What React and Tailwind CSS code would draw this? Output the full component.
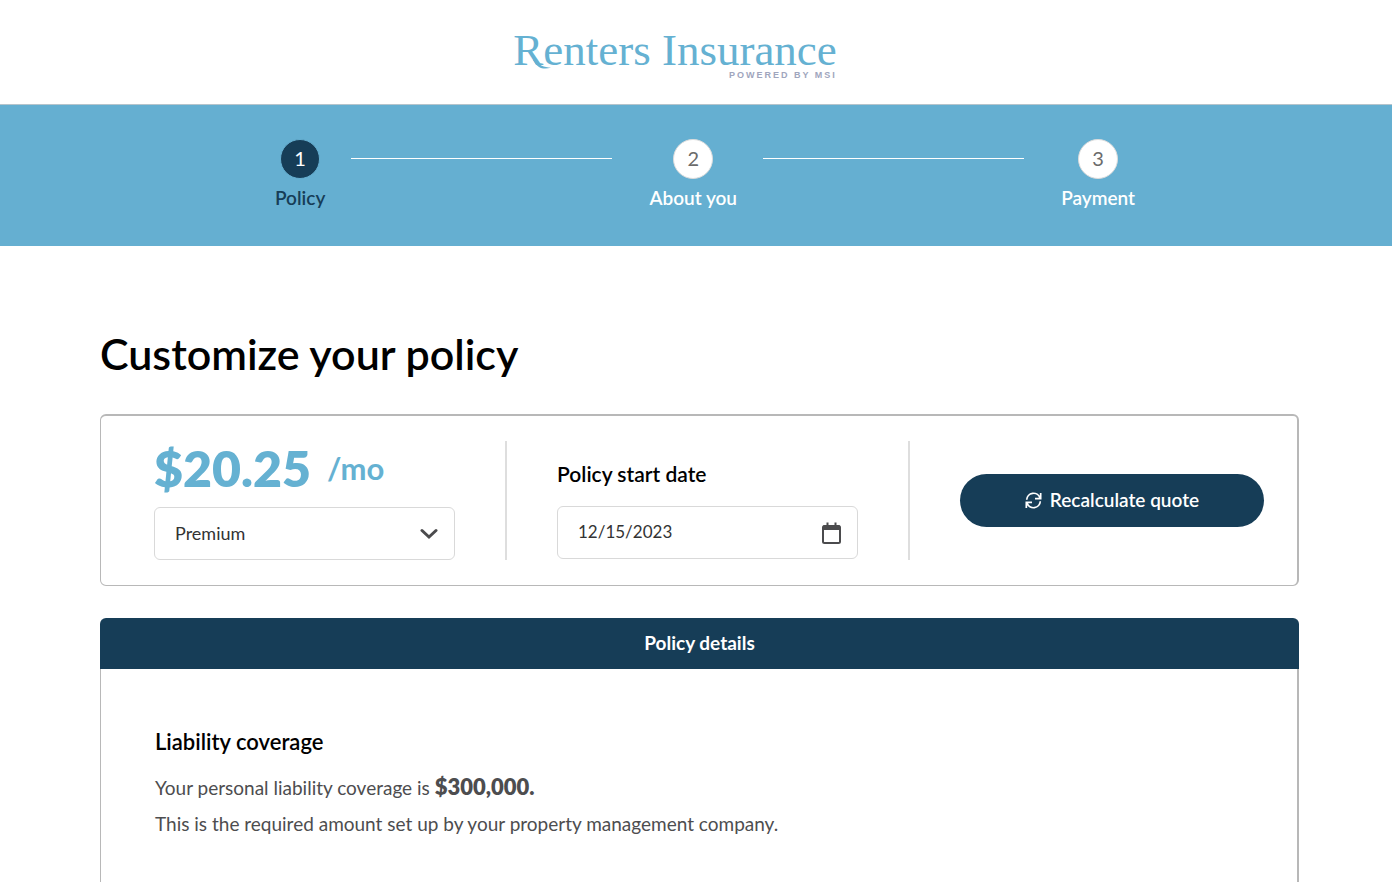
/**
 * Renters insurance quote page: brand header, three-step progress bar,
 * the quote summary card and the policy details panel.
 */
import { Fragment, useState } from 'react'

const STEPS = ['Policy', 'About you', 'Payment']
const PLANS = ['Basic', 'Standard', 'Premium']

function ChevronIcon() {
  return (
    <svg width="18" height="12" viewBox="0 0 18 12" fill="none" aria-hidden="true">
      <path d="M2 2.5l7 6.5 7-6.5" stroke="#4b4b4d" strokeWidth="3" strokeLinecap="round" />
    </svg>
  )
}

function CalendarIcon() {
  return (
    <svg width="19" height="22" viewBox="0 0 19 22" fill="none" aria-hidden="true">
      <path d="M5.5 0.5v3M13.5 0.5v3" stroke="#4b4b4d" strokeWidth="2" />
      <rect x="1" y="4" width="17" height="17" rx="1.5" stroke="#4b4b4d" strokeWidth="2" />
      <path d="M1 3.5h17v4.5H1z" fill="#4b4b4d" />
    </svg>
  )
}

function RefreshIcon() {
  return (
    <svg width="17" height="17" viewBox="0 0 18 18" fill="none" stroke="currentColor" strokeWidth="1.8" aria-hidden="true">
      <path d="M1.8 8.2A7.2 7.2 0 0 1 15.8 6.2M16.6 1v6h-6" />
      <path d="M16.2 9.8A7.2 7.2 0 0 1 2.2 11.8M1.4 17v-6h6" />
    </svg>
  )
}

// Swash that extends the leg of the R under the next letter
function LogoSwash() {
  return (
    <svg
      width="26"
      height="14"
      viewBox="0 0 26 14"
      fill="#65b1d2"
      aria-hidden="true"
      className="absolute top-[25px] left-[13px]"
    >
      <path d="M9 5C13 10 18 12.600 25 12.600C21 14 16 14 13 12C10 10 9 8 7 5z" />
    </svg>
  )
}

function Stepper({ current }) {
  return (
    <nav aria-label="Progress" className="h-[141px] bg-[#65afd1] pr-[257px] pl-[275px] pt-[34px]">
      <ol className="flex">
        {STEPS.map((label, i) => (
          <Fragment key={label}>
            {i > 0 && (
              <li aria-hidden="true" className="mt-[19px] mr-[37px] ml-[26px] h-px flex-1 bg-white" />
            )}
            <li className="flex flex-col items-center">
              <span
                className={
                  i === current
                    ? 'flex size-10 items-center justify-center rounded-full border border-[#65afd1] bg-[#163d57] pb-0.5 text-xl text-white'
                    : 'flex size-10 items-center justify-center rounded-full border border-[#dcdcdc] bg-white pb-0.5 text-xl text-[#6b6b6b]'
                }
              >
                {i + 1}
              </span>
              <span
                className={
                  i === current
                    ? 'mt-[7px] text-[19px] leading-6 font-semibold text-[#163d57]'
                    : 'mt-[7px] text-[19px] leading-6 font-semibold text-white'
                }
              >
                {label}
              </span>
            </li>
          </Fragment>
        ))}
      </ol>
    </nav>
  )
}

export default function App() {
  const [plan, setPlan] = useState('Premium')
  const [startDate, setStartDate] = useState('12/15/2023')

  return (
    <div className="h-screen overflow-hidden bg-white font-['Lato',sans-serif] text-black">
      <header className="flex h-[105px] justify-center border-b border-[#b5c4cc] pt-[30px] pr-[42px]">
        <div className="relative flex flex-col items-end">
          <div className="font-['Liberation_Serif',serif] text-[45px] leading-10 text-[#65b1d2]">
            Renters Insurance
          </div>
          <LogoSwash />
          <div className="font-['Liberation_Sans',sans-serif] text-[9px] leading-[10px] font-bold tracking-[2px] text-[#a0a5bd]">
            POWERED BY MSI
          </div>
        </div>
      </header>

      <Stepper current={0} />

      <main className="pt-[80px] pr-[93px] pl-[100px]">
        <h1 className="text-[43px] leading-[56px] font-semibold">Customize your policy</h1>

        <section className="mt-8 flex gap-[50px] rounded-md border border-t-2 border-r-2 border-[#b8b8b8] pt-[25px] pr-[33px] pb-[25px] pl-[53px]">
          <div className="flex-[301_1_0%]">
            <p className="flex items-center gap-4 leading-[54px] text-[#65b1d2]">
              <span className="text-[50px] font-extrabold">$20.25</span>
              <span className="text-[31px] font-bold">/mo</span>
            </p>
            <div className="relative mt-3">
              <select
                aria-label="Coverage plan"
                value={plan}
                onChange={(e) => setPlan(e.target.value)}
                className="block h-[53px] w-full appearance-none rounded-md border border-[#d9d9d9] bg-white px-5 pb-0.5 text-lg text-[#333]"
              >
                {PLANS.map((p) => (
                  <option key={p}>{p}</option>
                ))}
              </select>
              <span className="pointer-events-none absolute top-[21px] right-[17px]">
                <ChevronIcon />
              </span>
            </div>
          </div>

          <div className="w-[2px] bg-[#dedede]" />

          <div className="flex-[301_1_0%]">
            <label htmlFor="start-date" className="mt-[17px] block text-[21px] leading-8 font-semibold">
              Policy start date
            </label>
            <div className="mt-4 flex h-[53px] items-center rounded-md border border-[#d9d9d9] pr-4 pl-5">
              <input
                id="start-date"
                type="text"
                value={startDate}
                onChange={(e) => setStartDate(e.target.value)}
                className="min-w-0 flex-1 pb-0.5 text-[17px] text-[#333] outline-none"
              />
              <button type="button" aria-label="Open calendar">
                <CalendarIcon />
              </button>
            </div>
          </div>

          <div className="w-[2px] bg-[#dedede]" />

          <div className="flex flex-[304_1_0%] items-center">
            <button
              type="button"
              className="flex h-[53px] w-full items-center justify-center gap-2 rounded-full bg-[#163d57] text-[19px] font-semibold text-white"
            >
              <RefreshIcon />
              Recalculate quote
            </button>
          </div>
        </section>

        <section className="mt-8">
          <h2 className="rounded-t-md bg-[#163d57] pb-px text-center text-[19px] leading-[50px] font-bold text-white">
            Policy details
          </h2>
          <div className="min-h-[260px] border-r-2 border-l border-[#b8b8b8] px-[54px] pt-[57px]">
            <h3 className="text-[22px] leading-8 font-semibold">Liability coverage</h3>
            <p className="mt-3 text-[19px] leading-9 text-[#4d4d4f]">
              Your personal liability coverage is <strong className="text-[22px] leading-8 font-extrabold">$300,000.</strong>
              <br />
              This is the required amount set up by your property management company.
            </p>
          </div>
        </section>
      </main>
    </div>
  )
}
